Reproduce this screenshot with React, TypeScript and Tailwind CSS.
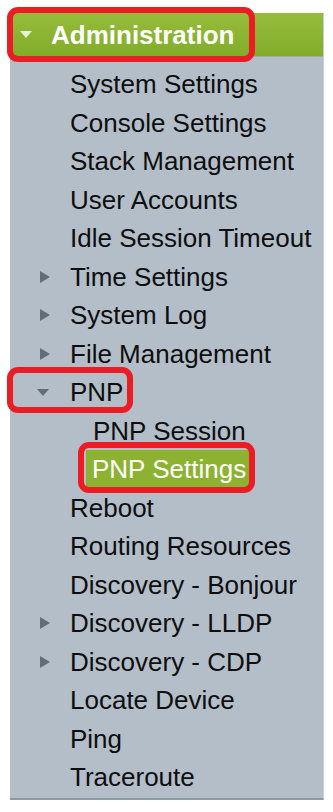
type Item = {
  label: string;
  arrow?: 'right' | 'down';
  sub?: boolean;
  active?: boolean;
};

const items: Item[] = [
  { label: 'System Settings' },
  { label: 'Console Settings' },
  { label: 'Stack Management' },
  { label: 'User Accounts' },
  { label: 'Idle Session Timeout' },
  { label: 'Time Settings', arrow: 'right' },
  { label: 'System Log', arrow: 'right' },
  { label: 'File Management', arrow: 'right' },
  { label: 'PNP', arrow: 'down' },
  { label: 'PNP Session', sub: true },
  { label: 'PNP Settings', sub: true, active: true },
  { label: 'Reboot' },
  { label: 'Routing Resources' },
  { label: 'Discovery - Bonjour' },
  { label: 'Discovery - LLDP', arrow: 'right' },
  { label: 'Discovery - CDP', arrow: 'right' },
  { label: 'Locate Device' },
  { label: 'Ping' },
  { label: 'Traceroute' },
];

function Arrow({ dir, color }: { dir: 'right' | 'down'; color: string }) {
  if (dir === 'right') {
    return (
      <svg width="10" height="12" viewBox="0 0 10 12" className="block ml-[3px]">
        <polygon points="0,0 10,6 0,12" fill={color} />
      </svg>
    );
  }
  return (
    <svg width="12" height="7" viewBox="0 0 12 7" className="block">
      <polygon points="0,0 12,0 6,7" fill={color} />
    </svg>
  );
}

function MenuRow({ item }: { item: Item }) {
  return (
    <div className="h-[38.5px] flex items-center pl-[27px]">
      <div className="w-[33px] flex items-center">
        {item.arrow && <Arrow dir={item.arrow} color="#626d78" />}
      </div>
      {item.active ? (
        <div className="ml-[16px] h-[38px] flex items-center pl-[6px] pr-[3px] bg-[#8db232] text-white">
          {item.label}
        </div>
      ) : (
        <div className={item.sub ? 'ml-[23px]' : ''}>{item.label}</div>
      )}
    </div>
  );
}

export default function App() {
  return (
    <div
      className="relative w-[333px] h-[812px] bg-white overflow-hidden pt-[13px]"
      style={{ fontFamily: '"Liberation Sans", Arial, sans-serif' }}
    >
      <div className="ml-[10px] w-[314px] bg-[#b3bec9] border-r border-[#c6ced6] border-b-2 border-b-[#8e99a4] text-[26px] leading-none text-[#0e0e0e]">
        {/* Header */}
        <div className="h-[44px] flex items-center bg-gradient-to-b from-[#95bd3b] to-[#84ac2b] border-b border-[#9ea9b4]">
          <div className="ml-[10px] opacity-80">
            <Arrow dir="down" color="#ffffff" />
          </div>
          <span className="ml-[19px] font-bold text-white">Administration</span>
        </div>

        {/* Items */}
        <div className="pt-[8px] pb-[1px]">
          {items.map((it) => (
            <MenuRow key={it.label} item={it} />
          ))}
        </div>
      </div>

      {/* Red highlight outlines */}
      <div className="absolute left-[7px] top-[7px] w-[248px] h-[55px] border-[6px] border-[#ec1c24] rounded-[11px]" />
      <div className="absolute left-[7px] top-[367px] w-[126px] h-[46px] border-[6px] border-[#ec1c24] rounded-[11px]" />
      <div className="absolute left-[78px] top-[442px] w-[177px] h-[51px] border-[6px] border-[#ec1c24] rounded-[11px]" />
    </div>
  );
}
